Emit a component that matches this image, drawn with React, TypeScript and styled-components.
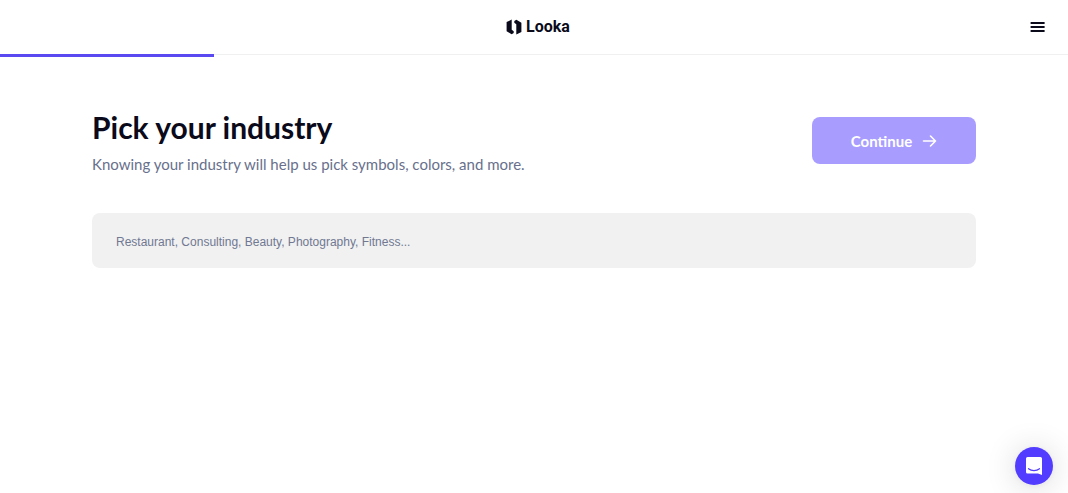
import React, { useState } from "react";
import styled, { createGlobalStyle } from "styled-components";

const GlobalStyle = createGlobalStyle`
  *, *::before, *::after { box-sizing: border-box; }
  body {
    margin: 0;
    background: #fff;
    color: #0a0a1b;
    font-family: Lato, "Liberation Sans", sans-serif;
  }
`;

const Header = styled.header`
  display: grid;
  grid-template-columns: 1fr auto 1fr;
  align-items: center;
  height: 55px;
  padding: 0 22px;
  border-bottom: 1px solid #f0f0f0;
`;

const LogoLink = styled.a`
  grid-column: 2;
  display: flex;
  align-items: center;
  gap: 4px;
  padding-left: 8px;
  color: #0a0a1b;
  font-family: Roboto, sans-serif;
  font-size: 16px;
  line-height: 20px;
  font-weight: 700;
  text-decoration: none;
`;

const MenuButton = styled.button`
  justify-self: end;
  display: flex;
  padding: 0;
  border: 0;
  background: none;
  color: #0a0a1b;
  cursor: pointer;
`;

const Progress = styled.div`
  height: 3px;
  margin-top: -1px;
`;

const ProgressFill = styled.div<{ $percent: number }>`
  width: ${(p) => p.$percent}%;
  height: 100%;
  background: #5a48f0;
`;

const Main = styled.main`
  max-width: 1284px;
  margin: 0 auto;
  padding: 50px 92px 0;
`;

const Intro = styled.div`
  display: flex;
  align-items: flex-start;
  justify-content: space-between;
  gap: 24px;
`;

const Title = styled.h1`
  margin: 0;
  font-size: 30px;
  line-height: 40px;
  font-weight: 700;
`;

const Subtitle = styled.p`
  margin: 5px 0 0;
  color: #68708c;
  font-size: 15px;
  line-height: 24px;
`;

const ContinueButton = styled.button`
  display: flex;
  align-items: center;
  justify-content: center;
  gap: 10px;
  flex: none;
  width: 164px;
  height: 47px;
  margin-top: 10px;
  padding: 0;
  border: 0;
  border-radius: 8px;
  background: #a89dff;
  color: #fff;
  font-family: inherit;
  font-size: 15px;
  line-height: 20px;
  font-weight: 700;
`;

const IndustryInput = styled.input`
  display: block;
  width: 100%;
  height: 55px;
  margin-top: 37px;
  padding: 2px 24px 0;
  border: 0;
  border-radius: 8px;
  background: #f1f1f1;
  color: #0a0a1b;
  font-family: "Liberation Sans", Arial, sans-serif;
  font-size: 12px;
  &::placeholder { color: #707892; opacity: 1; }
`;

const ChatButton = styled.button`
  position: fixed;
  right: 15px;
  bottom: 8px;
  display: flex;
  align-items: center;
  justify-content: center;
  width: 38px;
  height: 38px;
  padding: 0;
  border: 0;
  border-radius: 50%;
  background: #513cff;
  box-shadow: 0 1px 6px rgba(0, 0, 0, 0.06), 0 2px 32px rgba(0, 0, 0, 0.16);
  cursor: pointer;
`;

export default function App() {
  const [industry, setIndustry] = useState("");
  return (
    <>
      <GlobalStyle />
      <Header>
        <LogoLink href="/">
          <svg width="16" height="16" viewBox="0 0 16 16" fill="currentColor" aria-hidden="true">
            <path d="M5.700 .6 .6 3.100v9.200L5.600 15.200 7.700 14V12.200L5.700 10.700Z" />
            <path d="M10.300 15.400 15.400 12.900V3.700L10.400.8 8.300 2V3.800L10.300 5.300Z" />
          </svg>
          Looka
        </LogoLink>
        <MenuButton type="button" aria-label="Menu">
          <svg width="16" height="12" viewBox="0 0 16 12" fill="none" stroke="currentColor" strokeWidth="1.800" aria-hidden="true">
            <path d="M.6 2h14M.6 6h14M.6 10h14" />
          </svg>
        </MenuButton>
      </Header>
      <Progress role="progressbar" aria-label="Progress" aria-valuenow={20} aria-valuemin={0} aria-valuemax={100}>
        <ProgressFill $percent={20} />
      </Progress>
      <Main>
        <Intro>
          <div>
            <Title>Pick your industry</Title>
            <Subtitle>Knowing your industry will help us pick symbols, colors, and more.</Subtitle>
          </div>
          <ContinueButton type="button" disabled={industry === ""}>
            Continue
            <svg width="15" height="14" viewBox="0 0 15 14" fill="none" stroke="currentColor" strokeWidth="1.600" strokeLinecap="round" strokeLinejoin="round" aria-hidden="true">
              <path d="M1.500 7h12M8.500 2l5 5-5 5" />
            </svg>
          </ContinueButton>
        </Intro>
        <IndustryInput
          aria-label="Industry"
          placeholder="Restaurant, Consulting, Beauty, Photography, Fitness..."
          value={industry}
          onChange={(e) => setIndustry(e.target.value)}
        />
      </Main>
      <ChatButton type="button" aria-label="Open chat">
        <svg width="18" height="20" viewBox="0 0 18 20" fill="none" aria-hidden="true">
          <path d="M2.500 1h13A1.500 1.500 0 0 1 17 2.500V19l-4-1.500H2.500A1.500 1.500 0 0 1 1 16V2.500A1.500 1.500 0 0 1 2.500 1Z" fill="#fff" />
          <path d="M3.500 12.700c3.200 2.600 7.800 2.600 11 0" stroke="#513cff" strokeWidth="1.200" strokeLinecap="round" />
        </svg>
      </ChatButton>
    </>
  );
}
